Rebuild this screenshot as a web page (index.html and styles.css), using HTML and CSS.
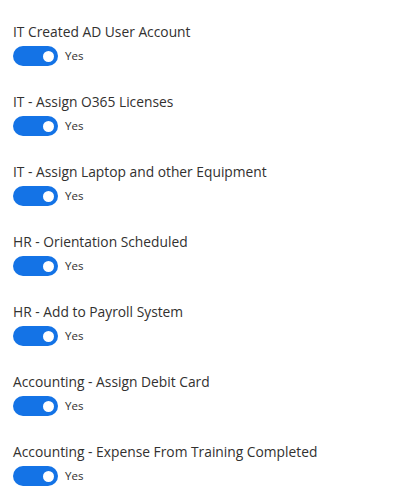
FILE: index.html
```html
<!DOCTYPE html>
<html>
<head>
<meta charset="utf-8">
<link rel="stylesheet" href="styles.css">
</head>
<body>
<div class="form">
  <div class="field">
    <div class="label">IT Created AD User Account</div>
    <div class="toggle-row"><span class="toggle"><span class="knob"></span></span><span class="state">Yes</span></div>
  </div>
  <div class="field">
    <div class="label">IT - Assign O365 Licenses</div>
    <div class="toggle-row"><span class="toggle"><span class="knob"></span></span><span class="state">Yes</span></div>
  </div>
  <div class="field">
    <div class="label">IT - Assign Laptop and other Equipment</div>
    <div class="toggle-row"><span class="toggle"><span class="knob"></span></span><span class="state">Yes</span></div>
  </div>
  <div class="field">
    <div class="label">HR - Orientation Scheduled</div>
    <div class="toggle-row"><span class="toggle"><span class="knob"></span></span><span class="state">Yes</span></div>
  </div>
  <div class="field">
    <div class="label">HR - Add to Payroll System</div>
    <div class="toggle-row"><span class="toggle"><span class="knob"></span></span><span class="state">Yes</span></div>
  </div>
  <div class="field">
    <div class="label">Accounting - Assign Debit Card</div>
    <div class="toggle-row"><span class="toggle"><span class="knob"></span></span><span class="state">Yes</span></div>
  </div>
  <div class="field">
    <div class="label">Accounting - Expense From Training Completed</div>
    <div class="toggle-row"><span class="toggle"><span class="knob"></span></span><span class="state">Yes</span></div>
  </div>
</div>
</body>
</html>
```
FILE: styles.css
```css
html, body {
  margin: 0;
  padding: 0;
  background: #ffffff;
}
body {
  font-family: "Open Sans", "Noto Sans", sans-serif;
  color: #323130;
}
.form {
  display: flex;
  flex-direction: column;
  gap: 26px;
  padding: 22px 0 0 13px;
}
.field {
  display: flex;
  flex-direction: column;
  gap: 4px;
}
.label {
  font-size: 13.8px;
  font-weight: 500;
  line-height: 20px;
  color: #323130;
}
.toggle-row {
  display: flex;
  align-items: center;
  gap: 7px;
  height: 20px;
}
.toggle {
  width: 45px;
  height: 20px;
  border-radius: 10px;
  background: #1473e6;
  display: flex;
  align-items: center;
  justify-content: flex-end;
  padding: 0 4px;
  box-sizing: border-box;
}
.knob {
  width: 11px;
  height: 11px;
  border-radius: 50%;
  background: #ffffff;
}
.state {
  font-size: 11.5px;
  font-weight: 400;
  line-height: 20px;
  color: #323130;
}
```
